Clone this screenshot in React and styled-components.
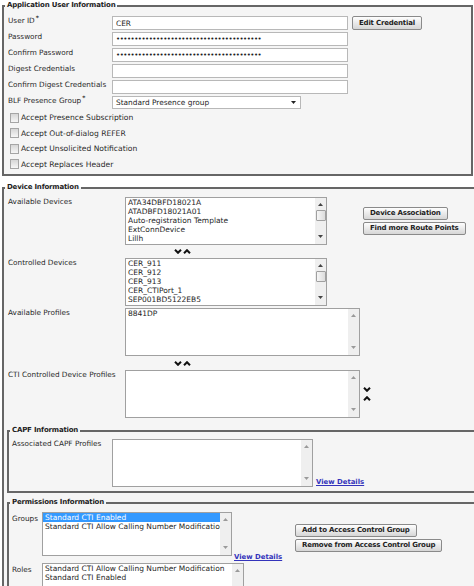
import React from "react";
import styled, { createGlobalStyle } from "styled-components";

const GlobalStyle = createGlobalStyle`
  html, body {
    margin: 0;
    padding: 0;
    background: #fff;
    overflow: hidden;
  }
  body {
    font-family: "DejaVu Sans", Verdana, sans-serif;
    color: #2a2a2a;
  }
`;

const Page = styled.div`
  width: 474px;
  height: 586px;
  padding: 1px 1px 0 2px;
  box-sizing: border-box;
  overflow: hidden;
`;

const Section = styled.fieldset`
  margin: ${(p) => p.$top || 0}px ${(p) => p.$right || 0}px 0 0;
  padding: ${(p) => p.$pad};
  border: 2px solid #666;
  background: #f5f5f5;
  min-width: 0;
  box-sizing: border-box;
`;

const SubSection = styled(Section)`
  margin-left: -1px;
  margin-right: -1px;
`;

const Legend = styled.legend`
  margin-left: ${(p) => p.$shift}px;
  padding: 0 2px;
  font-size: 7px;
  font-weight: bold;
  letter-spacing: -0.2px;
  line-height: 9px;
  color: #1e1e1e;
`;

const FormRow = styled.div`
  display: flex;
  align-items: flex-start;
  height: ${(p) => p.$h || 16}px;
  margin-top: ${(p) => p.$mt || 0}px;
`;

const FieldLabel = styled.div`
  flex: none;
  width: ${(p) => p.$w}px;
  padding-top: ${(p) => p.$dy || 0}px;
  font-size: 7.3px;
  line-height: 10px;
  white-space: nowrap;
  color: #2a2a2a;
`;

const Req = styled.sup`
  font-size: 6px;
  font-weight: bold;
  line-height: 0;
  margin-left: 1px;
`;

const TextBox = styled.input`
  flex: none;
  width: 236px;
  height: 14px;
  box-sizing: border-box;
  margin: 0;
  padding: 0 3px;
  border: 1px solid #b8b8b8;
  background: #fff;
  font-family: inherit;
  font-size: ${(p) => (p.type === "password" ? "7px" : "7.4px")};
  letter-spacing: ${(p) => (p.type === "password" ? "-0.5px" : "0")};
  color: #1e1e1e;
  outline: none;
`;

const SelectBox = styled.div`
  flex: none;
  width: 189px;
  height: 13px;
  box-sizing: border-box;
  border: 1px solid #b8b8b8;
  background: #fff;
  display: flex;
  align-items: center;
  justify-content: space-between;
  padding: 0 4px 0 3px;
  font-size: 7.4px;
  color: #1e1e1e;
`;

const CheckList = styled.div`
  margin-top: -2px;
`;

const CheckRow = styled.label`
  display: flex;
  align-items: center;
  gap: 2px;
  height: 15.5px;
  padding-left: 2px;
  font-size: 7.6px;
  color: #2a2a2a;
`;

const Check = styled.input.attrs({ type: "checkbox" })`
  appearance: none;
  flex: none;
  margin: 0;
  width: 9px;
  height: 10px;
  box-sizing: border-box;
  border: 1px solid #a5a5a5;
  background: linear-gradient(#d6d6d6, #f6f6f6);
`;

const Btn = styled.button`
  flex: none;
  height: ${(p) => p.$h || 13}px;
  margin: 0 0 0 ${(p) => p.$ml || 0}px;
  padding: 0 6px;
  border: 1px solid #8a8a8a;
  border-radius: 2px;
  background: linear-gradient(#fefefe, #d6d6d6);
  font-family: inherit;
  font-size: 7px;
  font-weight: bold;
  letter-spacing: -0.2px;
  line-height: 11px;
  color: #1e1e1e;
  white-space: nowrap;
`;

const ButtonCol = styled.div`
  display: flex;
  flex-direction: column;
  align-items: flex-start;
  gap: 2px;
  margin-left: ${(p) => p.$ml || 0}px;
  padding-top: ${(p) => p.$pt || 0}px;
`;

const ListBox = styled.div`
  flex: none;
  display: flex;
  width: ${(p) => p.$w}px;
  height: ${(p) => p.$h}px;
  box-sizing: border-box;
  border: 1px solid #a0a0a0;
  background: #fff;
`;

const ListItems = styled.div`
  flex: 1;
  min-width: 0;
  overflow: hidden;
  font-size: 7.5px;
  line-height: 9px;
  color: #1e1e1e;
`;

const Item = styled.div`
  padding-left: 2px;
  white-space: nowrap;
  overflow: hidden;
  background: ${(p) => (p.$selected ? "#3399ff" : "transparent")};
  color: ${(p) => (p.$selected ? "#fff" : "inherit")};
`;

const ScrollTrack = styled.div`
  flex: none;
  width: 11px;
  box-sizing: border-box;
  background: #efefef;
  display: flex;
  flex-direction: column;
  align-items: center;
  padding: 5px 0 6px;
`;

const Thumb = styled.div`
  width: 10px;
  height: 11px;
  margin-top: 4px;
  box-sizing: border-box;
  border: 1px solid #a0a0a0;
  border-radius: 1px;
  background: linear-gradient(90deg, #f6f6f6, #dcdcdc);
`;

const Spacer = styled.div`
  flex: 1;
`;

const ArrowRow = styled.div`
  display: flex;
  align-items: center;
  gap: 1px;
  height: ${(p) => p.$h}px;
  padding-left: 166px;
`;

const VerticalArrows = styled.div`
  display: flex;
  flex-direction: column;
  gap: 4px;
  margin-left: 3px;
  padding-top: 17px;
`;

const LinkCell = styled.div`
  flex: none;
  width: ${(p) => p.$w}px;
  align-self: stretch;
  display: flex;
  align-items: flex-end;
  padding-left: ${(p) => p.$pl}px;
  box-sizing: border-box;
`;

const DetailsLink = styled.a`
  margin-bottom: ${(p) => p.$mb || 0}px;
  font-size: 6.9px;
  font-weight: bold;
  line-height: 9px;
  color: #3333bb;
  text-decoration: underline;
  white-space: nowrap;
  cursor: pointer;
`;

const ScrollArrow = ({ up, dim }) => (
  <svg width="5" height="3" viewBox="0 0 5 3">
    <path d={up ? "M0 3 L2.5 0 L5 3 Z" : "M0 0 L2.5 3 L5 0 Z"} fill={dim ? "#9a9a9a" : "#444"} />
  </svg>
);

const Chevron = ({ up }) => (
  <svg width="8" height="5" viewBox="0 0 8 5">
    <path
      d={up ? "M1 4.2 L4 1.2 L7 4.2" : "M1 0.8 L4 3.8 L7 0.8"}
      fill="none"
      stroke="#111"
      strokeWidth="2"
    />
  </svg>
);

const DropArrow = () => (
  <svg width="5" height="3" viewBox="0 0 5 3">
    <path d="M0 0 L2.5 3 L5 0 Z" fill="#222" />
  </svg>
);

const List = ({ w, h, items = [], selected, thumb, dim }) => (
  <ListBox $w={w} $h={h}>
    <ListItems>
      {items.map((it, i) => (
        <Item key={it} $selected={i === selected}>
          {it}
        </Item>
      ))}
    </ListItems>
    <ScrollTrack>
      <ScrollArrow up dim={dim} />
      {thumb && <Thumb />}
      <Spacer />
      <ScrollArrow dim={dim} />
    </ScrollTrack>
  </ListBox>
);

const dots = "x".repeat(40);

const checks = [
  "Accept Presence Subscription",
  "Accept Out-of-dialog REFER",
  "Accept Unsolicited Notification",
  "Accept Replaces Header",
];

export default function App() {
  return (
    <>
      <GlobalStyle />
      <Page>
        <Section $pad="6px 4px 2px 4px">
          <Legend $shift={-3}>Application User Information</Legend>
          <FormRow>
            <FieldLabel $w={104}>
              User ID<Req>*</Req>
            </FieldLabel>
            <TextBox type="text" value="CER" readOnly />
            <Btn $h={14} $ml={4}>Edit Credential</Btn>
          </FormRow>
          <FormRow>
            <FieldLabel $w={104}>Password</FieldLabel>
            <TextBox type="password" value={dots} readOnly />
          </FormRow>
          <FormRow>
            <FieldLabel $w={104}>Confirm Password</FieldLabel>
            <TextBox type="password" value={dots} readOnly />
          </FormRow>
          <FormRow>
            <FieldLabel $w={104}>Digest Credentials</FieldLabel>
            <TextBox type="text" value="" readOnly />
          </FormRow>
          <FormRow>
            <FieldLabel $w={104}>Confirm Digest Credentials</FieldLabel>
            <TextBox type="text" value="" readOnly />
          </FormRow>
          <FormRow>
            <FieldLabel $w={104}>
              BLF Presence Group<Req>*</Req>
            </FieldLabel>
            <SelectBox>
              Standard Presence group
              <DropArrow />
            </SelectBox>
          </FormRow>
          <CheckList>
            {checks.map((c) => (
              <CheckRow key={c}>
                <Check />
                {c}
              </CheckRow>
            ))}
          </CheckList>
        </Section>

        <Section $top={7} $right={-10} $pad="5px 4px 0 4px">
          <Legend $shift={-3}>Device Information</Legend>
          <FormRow $h={48}>
            <FieldLabel $w={117}>Available Devices</FieldLabel>
            <List
              w={202}
              h={48}
              thumb
              items={[
                "ATA34DBFD18021A",
                "ATADBFD18021A01",
                "Auto-registration Template",
                "ExtConnDevice",
                "Lillh",
              ]}
            />
            <ButtonCol $ml={36} $pt={10}>
              <Btn>Device Association</Btn>
              <Btn>Find more Route Points</Btn>
            </ButtonCol>
          </FormRow>
          <ArrowRow $h={13}>
            <Chevron />
            <Chevron up />
          </ArrowRow>
          <FormRow $h={48}>
            <FieldLabel $w={117}>Controlled Devices</FieldLabel>
            <List
              w={202}
              h={48}
              thumb
              items={["CER_911", "CER_912", "CER_913", "CER_CTIPort_1", "SEP001BD5122EB5"]}
            />
          </FormRow>
          <FormRow $h={48} $mt={2}>
            <FieldLabel $w={117}>Available Profiles</FieldLabel>
            <List w={235} h={48} dim items={["8841DP"]} />
          </FormRow>
          <ArrowRow $h={14}>
            <Chevron />
            <Chevron up />
          </ArrowRow>
          <FormRow $h={48}>
            <FieldLabel $w={117}>CTI Controlled Device Profiles</FieldLabel>
            <List w={235} h={48} dim />
            <VerticalArrows>
              <Chevron />
              <Chevron up />
            </VerticalArrows>
          </FormRow>

          <SubSection $top={8} $pad="4px 3px 4px 3px">
            <Legend $shift={-2}>CAPF Information</Legend>
            <FormRow $h={48}>
              <FieldLabel $w={100}>Associated CAPF Profiles</FieldLabel>
              <List w={201} h={48} dim />
              <LinkCell $w={60} $pl={3}>
                <DetailsLink>View Details</DetailsLink>
              </LinkCell>
            </FormRow>
          </SubSection>

          <SubSection $top={5} $pad="5px 3px 0 3px">
            <Legend $shift={-2}>Permissions Information</Legend>
            <FormRow $h={44}>
              <FieldLabel $w={30} $dy={2}>
                Groups
              </FieldLabel>
              <List
                w={190}
                h={44}
                dim
                selected={0}
                items={["Standard CTI Enabled", "Standard CTI Allow Calling Number Modification"]}
              />
              <LinkCell $w={63} $pl={2}>
                <DetailsLink $mb={-6}>View Details</DetailsLink>
              </LinkCell>
              <ButtonCol $pt={12}>
                <Btn>Add to Access Control Group</Btn>
                <Btn>Remove from Access Control Group</Btn>
              </ButtonCol>
            </FormRow>
            <FormRow $h={44} $mt={7}>
              <FieldLabel $w={30} $dy={2}>
                Roles
              </FieldLabel>
              <List
                w={202}
                h={44}
                dim
                items={["Standard CTI Allow Calling Number Modification", "Standard CTI Enabled"]}
              />
            </FormRow>
          </SubSection>
        </Section>
      </Page>
    </>
  );
}
